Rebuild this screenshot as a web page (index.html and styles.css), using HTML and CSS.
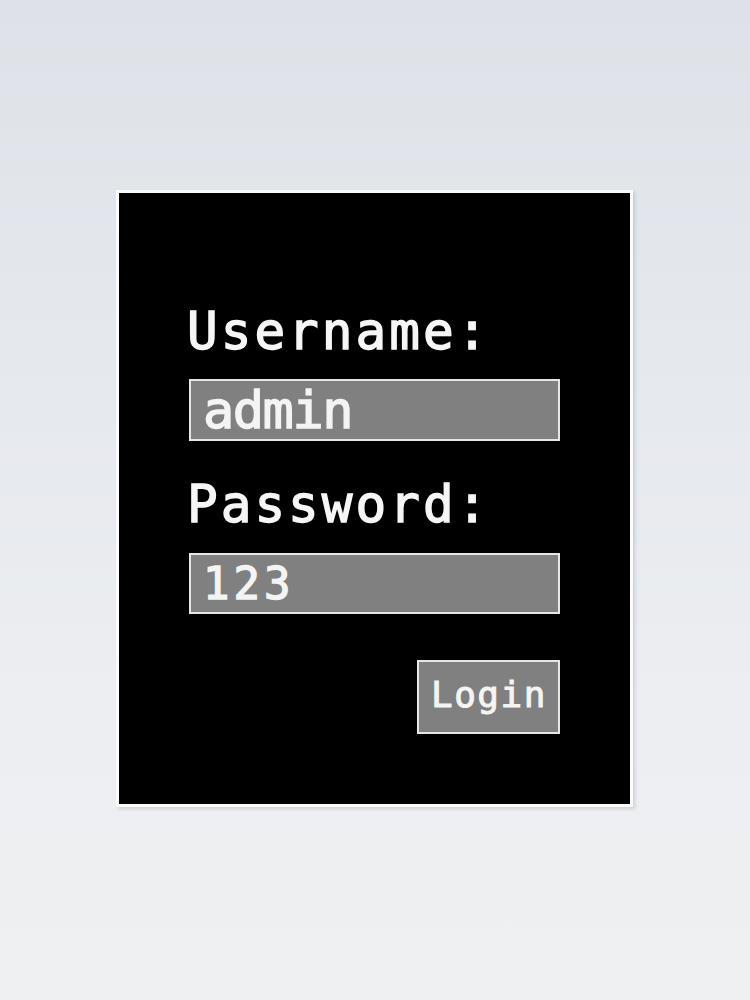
FILE: index.html
```html
<!DOCTYPE html>
<html lang="en">
<head>
<meta charset="utf-8">
<title>Login Poster</title>
<link rel="stylesheet" href="styles.css">
</head>
<body>
<div class="wall">
  <div class="poster">
    <div class="panel">
      <div class="label">Username:</div>
      <div class="field field-user">admin</div>
      <div class="label label-pass">Password:</div>
      <div class="field field-pass">123</div>
      <div class="actions">
        <div class="button">Login</div>
      </div>
    </div>
  </div>
</div>
</body>
</html>
```

FILE: styles.css
```css
html, body {
  margin: 0;
  padding: 0;
}

body {
  width: 750px;
  height: 1000px;
  overflow: hidden;
  background: linear-gradient(180deg, #dee2e8 0%, #e5e8ed 35%, #eceef1 70%, #eff0f2 100%);
  font-family: "DejaVu Sans Mono", "Liberation Mono", monospace;
}

.wall {
  display: flex;
  padding-top: 190px;
  padding-left: 116px;
}

.poster {
  width: 517px;
  height: 617px;
  box-sizing: border-box;
  border: 3px solid #fbfbfc;
  background: #000;
  box-shadow: 2px 2px 3px rgba(120, 125, 135, 0.25);
}

.panel {
  display: flex;
  flex-direction: column;
  padding: 113px 70px 0 68px;
  color: #f6f6f6;
}

.label {
  font-size: 51px;
  line-height: 51px;
  height: 51px;
  font-weight: normal;
  -webkit-text-stroke: 1.4px #f6f6f6;
  letter-spacing: 3px;
  white-space: nowrap;
}

.label-pass {
  margin-top: 38px;
}

.field {
  margin-top: 22px;
  margin-left: 2px;
  width: 371px;
  box-sizing: border-box;
  border: 2px solid #e6e6e6;
  background: #808080;
  font-weight: normal;
  color: #f4f4f4;
  -webkit-text-stroke: 1.4px #f4f4f4;
  white-space: nowrap;
  padding-left: 12px;
}

.field-user {
  height: 62px;
  font-size: 52px;
  line-height: 52px;
  padding-top: 3px;
  letter-spacing: -1.5px;
}

.field-pass {
  margin-top: 23px;
  height: 61px;
  font-size: 44px;
  line-height: 44px;
  padding-top: 7px;
  letter-spacing: 4px;
}

.actions {
  display: flex;
  justify-content: flex-end;
  margin-top: 46px;
  width: 373px;
}

.button {
  width: 143px;
  height: 74px;
  box-sizing: border-box;
  border: 2px solid #e6e6e6;
  background: #808080;
  color: #f4f4f4;
  -webkit-text-stroke: 1px #f4f4f4;
  font-weight: normal;
  font-size: 36px;
  line-height: 36px;
  padding: 15px 0 0 12px;
  letter-spacing: 1.5px;
  white-space: nowrap;
}
```
